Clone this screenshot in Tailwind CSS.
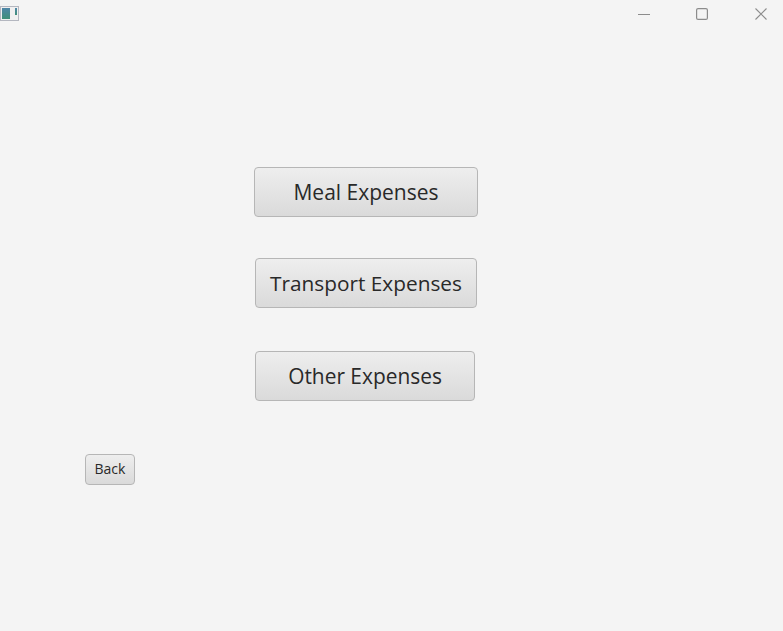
<!DOCTYPE html>
<html lang="en">
<head>
    <meta charset="UTF-8">
    <title>Expenses</title>
    <script src="https://cdn.jsdelivr.net/npm/@tailwindcss/browser@4"></script>
</head>
<body class="bg-[#f4f4f4] font-['Open_Sans',sans-serif] text-[#292929] h-[631px] w-[783px] overflow-hidden">
    <!-- Title bar -->
    <header class="flex items-start justify-between h-[30px]">
        <svg class="mt-[5px] blur-[0.4px]" width="20" height="17" viewBox="0 0 20 17">
            <defs>
                <linearGradient id="appIcon" x1="0" y1="0" x2="0" y2="1">
                    <stop offset="0" stop-color="#4f86a8"/>
                    <stop offset="1" stop-color="#3f9078"/>
                </linearGradient>
            </defs>
            <rect x="0.5" y="1.5" width="18" height="14" fill="#f0f0f0" stroke="#b4b7c0"/>
            <rect x="2" y="3" width="8" height="11" fill="url(#appIcon)"/>
            <rect x="15" y="3" width="2" height="7" fill="url(#appIcon)"/>
        </svg>
        <div class="flex items-center h-[28px]">
            <svg width="12" height="12" viewBox="0 0 12 12" class="mr-[46px]"><path d="M0 6.5H12" stroke="#8c8c8c"/></svg>
            <svg width="12" height="12" viewBox="0 0 12 12" class="mr-[47px]"><rect x="0.6" y="0.6" width="10.8" height="10.8" rx="1.5" fill="none" stroke="#8c8c8c" stroke-width="1.2"/></svg>
            <svg width="12" height="12" viewBox="0 0 12 12" class="mr-[16px]"><path d="M0.5 0.5L11.5 11.5M11.5 0.5L0.5 11.5" stroke="#8c8c8c" stroke-width="1.1"/></svg>
        </div>
    </header>

    <main class="flex flex-col items-start pt-[137px]">
        <button class="ml-[254px] w-[224px] h-[50px] pt-px text-[21px] rounded-[4px] border border-[#b6b6b6] bg-gradient-to-b from-[#eeeeee] to-[#dadada]">Meal Expenses</button>
        <button class="ml-[255px] mt-[41px] w-[222px] h-[50px] pt-px text-[20.8px] rounded-[4px] border border-[#b6b6b6] bg-gradient-to-b from-[#eeeeee] to-[#dadada]">Transport Expenses</button>
        <button class="ml-[255px] mt-[43px] w-[220px] h-[50px] pt-px text-[20.9px] rounded-[4px] border border-[#b6b6b6] bg-gradient-to-b from-[#eeeeee] to-[#dadada]">Other Expenses</button>
        <button class="ml-[85px] mt-[53px] w-[50px] h-[31px] pb-[2px] text-[14px] rounded-[4px] border border-[#b6b6b6] bg-gradient-to-b from-[#eeeeee] to-[#dadada]">Back</button>
    </main>
</body>
</html>
